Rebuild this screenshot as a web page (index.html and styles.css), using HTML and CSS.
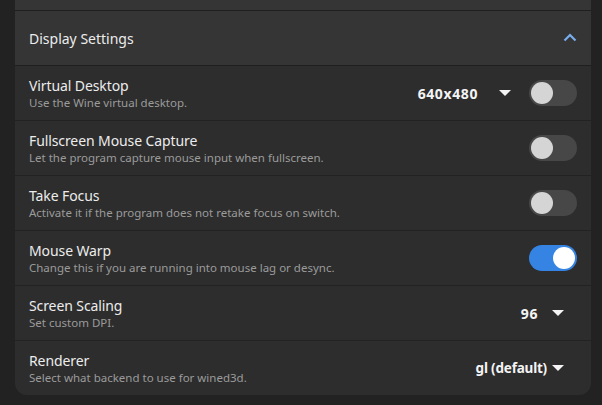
FILE: index.html
```html
<!DOCTYPE html>
<html>
<head>
<meta charset="utf-8">
<link rel="stylesheet" href="styles.css">
</head>
<body>
<div class="card">
  <div class="prev"></div>
  <div class="header">
    <span class="header-title">Display Settings</span>
    <svg class="chevron" width="14" height="9" viewBox="0 0 14 9"><polyline points="1.5,7.5 7,2 12.5,7.5" fill="none" stroke="#78aeed" stroke-width="2.2"/></svg>
  </div>
  <div class="row">
    <div class="text">
      <div class="title">Virtual Desktop</div>
      <div class="subtitle">Use the Wine virtual desktop.</div>
    </div>
    <div class="dropdown dd-res"><span class="dd-label">640x480</span><span class="arrow"></span></div>
    <div class="switch"><span class="knob"></span></div>
  </div>
  <div class="row">
    <div class="text">
      <div class="title">Fullscreen Mouse Capture</div>
      <div class="subtitle">Let the program capture mouse input when fullscreen.</div>
    </div>
    <div class="switch"><span class="knob"></span></div>
  </div>
  <div class="row">
    <div class="text">
      <div class="title">Take Focus</div>
      <div class="subtitle">Activate it if the program does not retake focus on switch.</div>
    </div>
    <div class="switch"><span class="knob"></span></div>
  </div>
  <div class="row">
    <div class="text">
      <div class="title">Mouse Warp</div>
      <div class="subtitle">Change this if you are running into mouse lag or desync.</div>
    </div>
    <div class="switch on"><span class="knob"></span></div>
  </div>
  <div class="row">
    <div class="text">
      <div class="title">Screen Scaling</div>
      <div class="subtitle">Set custom DPI.</div>
    </div>
    <div class="dropdown dd-dpi"><span class="dd-label">96</span><span class="arrow"></span></div>
  </div>
  <div class="row last">
    <div class="text">
      <div class="title">Renderer</div>
      <div class="subtitle">Select what backend to use for wined3d.</div>
    </div>
    <div class="dropdown dd-renderer"><span class="dd-label">gl (default)</span><span class="arrow"></span></div>
  </div>
</div>
</body>
</html>
```
FILE: styles.css
```css
html, body {
  margin: 0;
  padding: 0;
  background: #222222;
  font-family: "Noto Sans", "Open Sans", sans-serif;
  color: #ececec;
}
.card {
  width: 576px;
  margin-left: 15px;
  background: #2d2d2d;
  border-radius: 0 0 12px 12px;
  overflow: hidden;
}
.prev {
  height: 10px;
  background: #353535;
  border-bottom: 1px solid #1f1f1f;
}
.header {
  height: 54px;
  background: #353535;
  border-bottom: 1px solid #1f1f1f;
  display: flex;
  align-items: center;
  padding: 0 14px;
}
.header-title {
  flex: 1;
  font-size: 14px;
  color: #ececec;
}
.chevron {
  margin-top: -1px;
}
.row {
  height: 54px;
  display: flex;
  align-items: center;
  padding: 0 14px;
  border-bottom: 1px solid #222222;
}
.row.last {
  border-bottom: none;
}
.text {
  flex: 1;
  display: flex;
  flex-direction: column;
  margin-top: -1px;
}
.title {
  font-size: 14px;
  line-height: 19px;
  color: #ececec;
  letter-spacing: -0.1px;
}
.subtitle {
  font-size: 11.5px;
  line-height: 15px;
  color: #9b9b9b;
}
.dropdown {
  display: flex;
  align-items: center;
  color: #f4f4f4;
  font-weight: 700;
  font-size: 14px;
  letter-spacing: 0.6px;
}
.arrow {
  width: 0;
  height: 0;
  border-left: 6px solid transparent;
  border-right: 6px solid transparent;
  border-top: 6px solid #f4f4f4;
}
.dd-res {
  margin-right: 18px;
}
.dd-res .arrow {
  margin-left: 21px;
}
.dd-dpi {
  margin-right: 13px;
}
.dd-dpi .arrow {
  margin-left: 14px;
}
.dd-renderer {
  margin-right: 13px;
  font-size: 13.5px;
  letter-spacing: -0.2px;
}
.dd-renderer .arrow {
  margin-left: 5px;
}
.switch {
  width: 48px;
  height: 26px;
  border-radius: 13px;
  background: #474747;
  display: flex;
  align-items: center;
  padding: 0 2px;
  box-sizing: border-box;
}
.knob {
  width: 22px;
  height: 22px;
  border-radius: 50%;
  background: #d5d5d5;
}
.switch.on {
  background: #3584e4;
  justify-content: flex-end;
}
.switch.on .knob {
  background: #ffffff;
}
```
